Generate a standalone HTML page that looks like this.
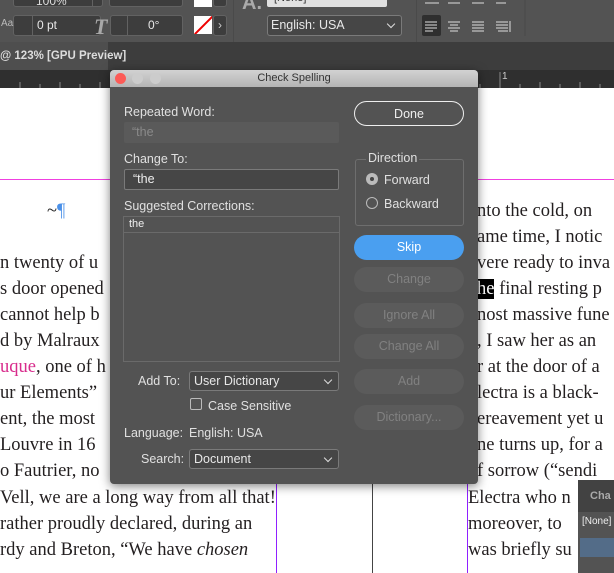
<!DOCTYPE html>
<html><head><style>
*{margin:0;padding:0;box-sizing:border-box}
body{width:614px;height:573px;overflow:hidden;position:relative;background:#fff;font-family:"Liberation Sans",sans-serif}
.a{position:absolute}
.fld{position:absolute;background:#3d3d3d;border:1px solid #626262;border-radius:3px;color:#e8e8e8;font-size:12px}
.t{position:absolute;font-family:"Liberation Serif",serif;font-size:18.5px;color:#231f20;white-space:nowrap;line-height:26px}
.lbl{position:absolute;color:#e0e0e0;font-size:12.5px;white-space:nowrap}
.btn{position:absolute;left:354px;width:110px;height:25px;border-radius:13px;background:#5b5b5b;color:#818181;font-size:12.5px;text-align:center;line-height:25px}
.sel{position:absolute;background:#464646;border:1px solid #7a7a7a;border-radius:3px;color:#e8e8e8;font-size:12.5px;padding-left:4px;line-height:18px}
.sel:after{content:"";position:absolute;right:7px;top:5px;width:5px;height:5px;border-right:1px solid #ddd;border-bottom:1px solid #ddd;transform:rotate(45deg)}
</style></head><body>
<!-- toolbar -->
<div class="a" style="left:0;top:0;width:614px;height:42px;background:#535353"></div>
<div class="fld" style="left:13px;top:-6px;width:90px;height:13px"></div>
<div class="a" style="left:36px;top:-6px;color:#ddd;font-size:12px">100%</div>
<div class="fld" style="left:13px;top:15px;width:88px;height:21px"></div>
<div class="a" style="left:32px;top:15px;width:1px;height:21px;background:#626262"></div>
<div class="a" style="left:37px;top:18px;color:#e8e8e8;font-size:12px">0 pt</div>
<div class="a" style="left:1px;top:18px;color:#bbb;font-size:10px">Aa</div>
<div class="a" style="left:92px;top:-6px;width:1px;height:13px;background:#626262"></div>
<div class="fld" style="left:109px;top:-6px;width:74px;height:13px"></div>
<div class="fld" style="left:110px;top:15px;width:73px;height:21px"></div>
<div class="a" style="left:127px;top:15px;width:1px;height:21px;background:#626262"></div>
<div class="a" style="left:148px;top:18px;color:#e8e8e8;font-size:12px">0°</div>
<div class="a" style="left:94px;top:14px;color:#a8a8a8;font-size:22px;font-family:'Liberation Serif',serif;font-style:italic;font-weight:bold">T</div>
<div class="a" style="left:194px;top:-4px;width:18px;height:11px;background:#fff"></div>
<div class="a" style="left:194px;top:16px;width:18px;height:18px;background:#fff;overflow:hidden"><div style="position:absolute;left:-3px;top:8px;width:26px;height:2px;background:#e00;transform:rotate(-45deg)"></div></div>
<div class="fld" style="left:213px;top:-6px;width:14px;height:13px"></div>
<div class="fld" style="left:213px;top:15px;width:14px;height:21px;color:#ccc;text-align:center;line-height:19px">›</div>
<div class="a" style="left:233px;top:0;width:1px;height:42px;background:#4a4a4a"></div>
<div class="a" style="left:242px;top:-8px;color:#aaa;font-size:20px;font-weight:bold">A.</div>
<div class="a" style="left:267px;top:-6px;width:120px;height:13px;background:#e0e0e0;border-radius:2px;font-size:11px;padding-left:7px;color:#333;line-height:8px">[None]</div>
<div class="sel" style="left:267px;top:15px;width:135px;height:21px;line-height:19px;padding-left:3px">English: USA</div>
<div class="a" style="left:416px;top:0;width:1px;height:42px;background:#4a4a4a"></div>
<div class="a" style="left:422px;top:15px;width:19px;height:21px;background:#2f2f2f;border-radius:2px"></div>
<svg class="a" style="left:420px;top:0" width="194" height="36" stroke="#ddd" stroke-width="1">
<g><path d="M5 3h14M5 22h12M5 25h12M5 28h12M5 31h8"/><path d="M28 3h12M28 22h12M30 25h8M28 28h12M30 31h8"/><path d="M52 3h12M52 22h12M52 25h12M52 28h12M52 31h12"/><path d="M76 3h10M76 22h12M76 25h12M76 28h12M78 31h10M90 21v11"/></g>
<path d="M105 0v42" stroke="#4a4a4a"/></svg>
<!-- tab bar -->
<div class="a" style="left:0;top:42px;width:614px;height:28px;background:#3d3d3d"></div>
<div class="a" style="left:0;top:42px;width:108px;height:28px;background:#4e4e4e;color:#ddd;font-size:11.5px;line-height:28px;font-weight:bold;white-space:nowrap">@ 123% [GPU Preview]</div>
<!-- ruler -->
<div class="a" style="left:0;top:70px;width:614px;height:18px;background:#2f2f2f"></div>
<svg class="a" style="left:0;top:70px" width="614" height="18" stroke="#888"><path d="M20 12v6M40 14v4M60 12v6M80 14v4M100 12v6M480 14v4M500 2v16M520 14v4M540 12v6M560 14v4M580 12v6M600 14v4"/></svg>
<div class="a" style="left:502px;top:71px;color:#ccc;font-size:10px">1</div>
<!-- page -->
<div class="a" style="left:0;top:179px;width:614px;height:1px;background:#f040e0"></div>
<div class="a" style="left:276px;top:480px;width:1px;height:93px;background:#9020ff"></div>
<div class="a" style="left:372px;top:480px;width:1px;height:93px;background:#444"></div>
<div class="a" style="left:467px;top:480px;width:1px;height:93px;background:#9020ff"></div>
<div class="t" style="left:47px;top:198px;color:#222">~<span style="color:#4a90e8">¶</span></div>
<div class="t" style="left:0;top:250px">n twenty of u</div>
<div class="t" style="left:0;top:276px">s door opened</div>
<div class="t" style="left:0;top:302px">cannot help b</div>
<div class="t" style="left:0;top:328px">d by Malraux</div>
<div class="t" style="left:0;top:354px"><span style="color:#d82c8c">uque</span>, one of h</div>
<div class="t" style="left:0;top:380px">ur Elements”</div>
<div class="t" style="left:0;top:406px">ent, the most</div>
<div class="t" style="left:0;top:432px"> Louvre in 16</div>
<div class="t" style="left:0;top:458px">o Fautrier, no</div>
<div class="t" style="left:0;top:485px">Vell, we are a long way from all that!</div>
<div class="t" style="left:0;top:511px">rather proudly declared, during an</div>
<div class="t" style="left:0;top:537px">rdy and Breton, “We have <i>chosen</i></div>
<div class="t" style="left:477px;top:198px">nto the cold, on</div>
<div class="t" style="left:477px;top:224px">ame time, I notic</div>
<div class="t" style="left:477px;top:250px">vere ready to inva</div>
<div class="t" style="left:477px;top:276px"><span style="background:#000;color:#fff">he</span> final resting p</div>
<div class="t" style="left:477px;top:302px">nost massive fune</div>
<div class="t" style="left:477px;top:328px">, I saw her as an</div>
<div class="t" style="left:477px;top:354px">r at the door of a</div>
<div class="t" style="left:477px;top:380px">lectra is a black-</div>
<div class="t" style="left:477px;top:406px">ereavement yet u</div>
<div class="t" style="left:477px;top:432px">ne turns up, for a</div>
<div class="t" style="left:477px;top:458px">f sorrow (“sendi</div>
<div class="t" style="left:468px;top:485px">Electra who n</div>
<div class="t" style="left:468px;top:511px">moreover, to</div>
<div class="t" style="left:468px;top:537px">was briefly su</div>
<!-- bottom right panel -->
<div class="a" style="left:578px;top:480px;width:36px;height:93px;background:#535353"></div>
<div class="a" style="left:578px;top:480px;width:36px;height:32px;background:#424242;color:#aaa;font-size:11px;font-weight:bold;padding:10px 0 0 12px">Cha</div>
<div class="a" style="left:582px;top:516px;color:#eee;font-size:10px">[None]</div>
<div class="a" style="left:580px;top:538px;width:34px;height:19px;background:#536c88"></div>
<!-- dialog -->
<div class="a" style="left:110px;top:70px;width:368px;height:414px;background:#535353;border-radius:4px;box-shadow:0 2px 10px rgba(0,0,0,.5)"></div>
<div class="a" style="left:110px;top:70px;width:368px;height:17px;background:linear-gradient(#d2d2d2,#b4b4b4);border-radius:4px 4px 0 0;text-align:center;font-size:11px;color:#333;line-height:17px">Check Spelling</div>
<div class="a" style="left:115px;top:73px;width:11px;height:11px;border-radius:50%;background:#fc5b57"></div>
<div class="a" style="left:132px;top:73px;width:11px;height:11px;border-radius:50%;background:#ccc"></div>
<div class="a" style="left:150px;top:73px;width:11px;height:11px;border-radius:50%;background:#ccc"></div>
<div class="lbl" style="left:124px;top:105px">Repeated Word:</div>
<div class="a" style="left:124px;top:122px;width:215px;height:21px;background:#5a5a5a;border-radius:2px;color:#8a8a8a;font-size:12.5px;padding:3px 0 0 8px">“the</div>
<div class="lbl" style="left:124px;top:152px">Change To:</div>
<div class="a" style="left:124px;top:169px;width:215px;height:21px;background:#464646;border:1px solid #7a7a7a;border-radius:2px;color:#eee;font-size:12.5px;padding:2px 0 0 8px">“the</div>
<div class="lbl" style="left:124px;top:199px">Suggested Corrections:</div>
<div class="a" style="left:123px;top:216px;width:217px;height:146px;border:1px solid #6a6a6a"></div>
<div class="a" style="left:124px;top:232px;width:215px;height:1px;background:#6a6a6a"></div>
<div class="a" style="left:129px;top:218px;color:#eee;font-size:11px">the</div>
<div class="lbl" style="left:138px;top:374px">Add To:</div>
<div class="sel" style="left:189px;top:371px;width:150px;height:20px">User Dictionary</div>
<div class="a" style="left:190px;top:398px;width:12px;height:12px;border:1px solid #bbb;border-radius:2px"></div>
<div class="lbl" style="left:208px;top:399px">Case Sensitive</div>
<div class="lbl" style="left:124px;top:426px">Language:</div>
<div class="lbl" style="left:189px;top:426px">English: USA</div>
<div class="lbl" style="left:141px;top:452px">Search:</div>
<div class="sel" style="left:189px;top:449px;width:150px;height:20px">Document</div>
<div class="btn" style="top:101px;background:none;border:1.5px solid #eee;color:#eee">Done</div>
<div class="a" style="left:355px;top:159px;width:109px;height:67px;border:1px solid #6e6e6e;border-radius:3px"></div>
<div class="lbl" style="left:366px;top:151px;background:#535353;padding:0 2px">Direction</div>
<div class="a" style="left:366px;top:173px;width:12px;height:12px;border-radius:50%;background:#bbb"><div style="position:absolute;left:4px;top:4px;width:4px;height:4px;border-radius:50%;background:#444"></div></div>
<div class="lbl" style="left:384px;top:173px">Forward</div>
<div class="a" style="left:366px;top:197px;width:12px;height:12px;border-radius:50%;border:1px solid #bbb"></div>
<div class="lbl" style="left:384px;top:197px">Backward</div>
<div class="btn" style="top:235px;background:#4a9ff0;color:#fff">Skip</div>
<div class="btn" style="top:267px">Change</div>
<div class="btn" style="top:303px">Ignore All</div>
<div class="btn" style="top:334px">Change All</div>
<div class="btn" style="top:369px">Add</div>
<div class="btn" style="top:405px">Dictionary...</div>
</body></html>
